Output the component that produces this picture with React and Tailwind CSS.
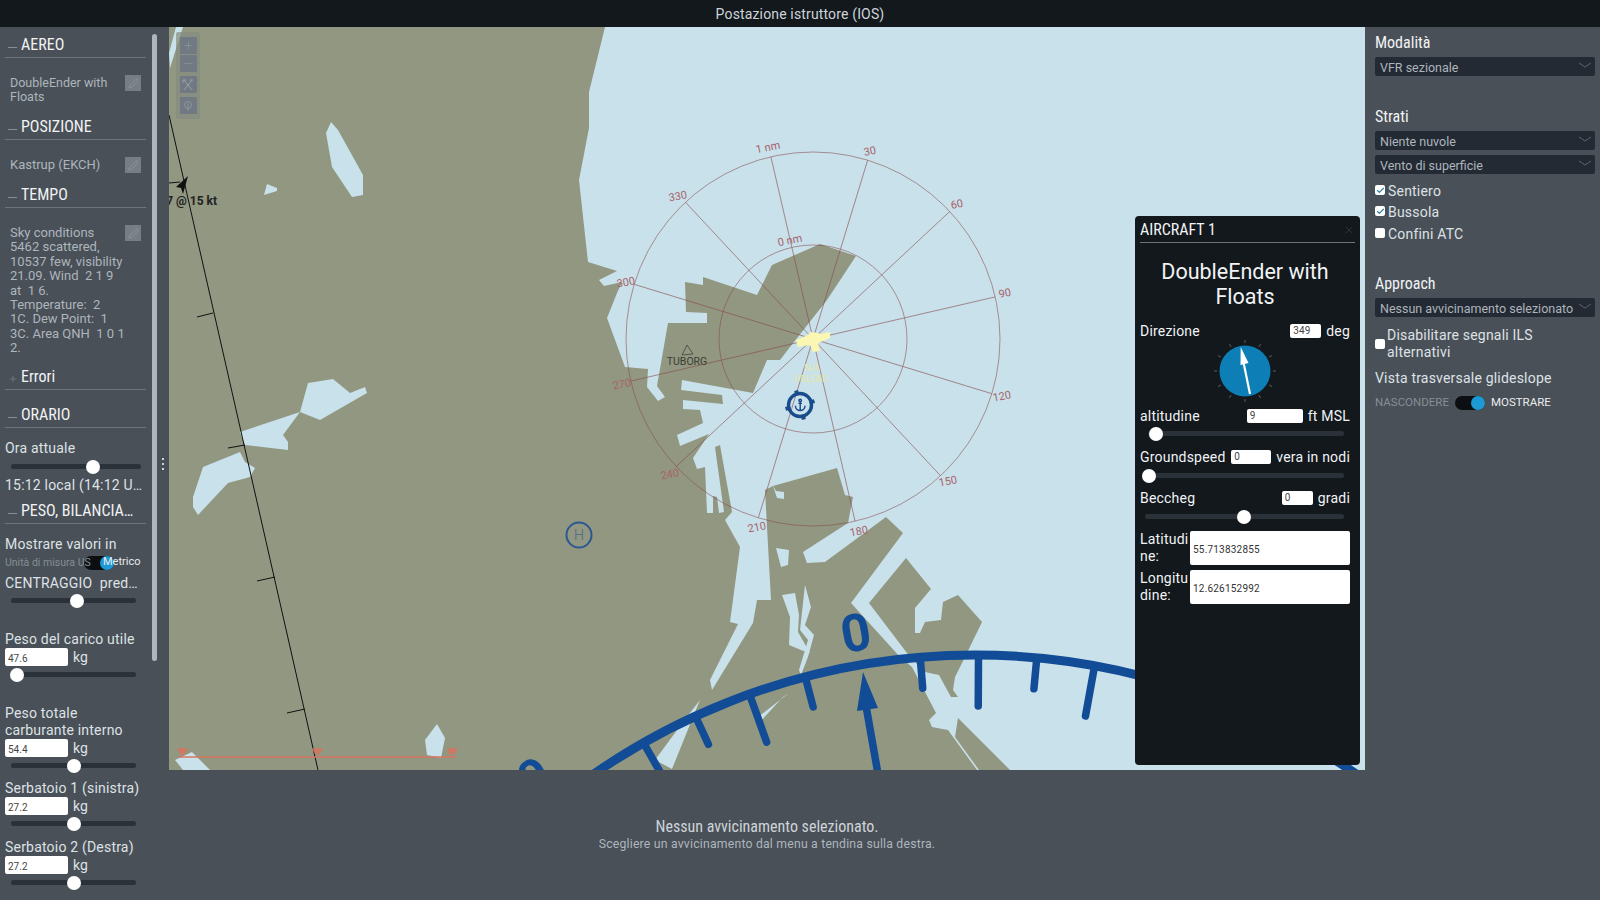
import React from "react";
import { Plus, Minus, Pen, Check, X } from "lucide-react";

const condensed = "font-['Roboto_Condensed','Liberation_Sans_Narrow','Roboto',sans-serif]";

function SectionHeader({ label, open = true }) {
  return (
    <div className="mx-[5px] flex h-[29px] items-center border-b border-[#6c757d] pt-[4px]">
      <span className="ml-[3px] mr-[4px] w-[9px] shrink-0 text-[#868e96]">
        {open ? <span className="mt-[4px] block h-px w-[9px] bg-[#868e96]" /> : <Plus size={10} strokeWidth={1} className="mt-[4px] text-[#9aa1a8]" />}
      </span>
      <span className={`block w-[115px] shrink-0 truncate text-[16px] leading-[22px] text-[#f1f3f5] ${condensed}`}>{label}</span>
    </div>
  );
}

function EditBtn() {
  return (
    <span className="flex h-4 w-4 shrink-0 items-center justify-center bg-[#767d84]">
      <Pen size={11} strokeWidth={1} className="text-[#a5acb3]" />
    </span>
  );
}

function Slider({ thumb, className = "" }) {
  return (
    <div className={`relative h-[5px] rounded-full bg-[#2b3138] ${className}`}>
      <span
        className="absolute top-1/2 h-[14px] w-[14px] -translate-x-1/2 -translate-y-1/2 rounded-full bg-white"
        style={{ left: `${thumb}px` }}
      />
    </div>
  );
}

function Num({ value, className = "" }) {
  return (
    <span className={`flex items-end overflow-hidden rounded-[2px] bg-white pb-[1px] pl-[3px] text-[10px] leading-[12px] text-[#444] ${className}`}>
      {value}
    </span>
  );
}

function LeftField({ label, value, thumb }) {
  return (
    <div className="mx-[5px]">
      <div className="text-[14px] leading-[17px] tracking-[0.2px] text-[#dee2e6]">{label}</div>
      <div className="flex h-[18px] items-center gap-[5px]">
        <Num value={value} className="h-[18px] w-[63px]" />
        <span className="text-[14px] text-[#dee2e6]">kg</span>
      </div>
      <Slider thumb={thumb} className="ml-[6px] mt-[6px] w-[125px]" />
    </div>
  );
}

function Select({ label, mt = "" }) {
  return (
    <div className={`relative flex h-[19px] items-center rounded-[2px] bg-[#242a33] pl-[5px] pt-[4px] text-[12.5px] text-[#adb5bd] ${mt}`}>
      <span className="whitespace-nowrap">{label}</span>
      <svg width="14" height="7" viewBox="0 0 14 7" fill="none" stroke="#5c636b" strokeWidth="1" className="absolute right-[3px] top-[5px]">
        <path d="M1 1l6 4 6-4" />
      </svg>
    </div>
  );
}

function CheckRow({ label, checked, mt = "" }) {
  return (
    <div className={`flex h-[21px] items-center text-[14px] tracking-[0.2px] text-[#dee2e6] ${mt}`}>
      <span className="-mt-[3px] mr-[3px] flex h-[10px] w-[10px] shrink-0 items-center justify-center rounded-[2px] bg-white">
        {checked && <Check size={9} strokeWidth={3} className="text-[#2f7f9f]" />}
      </span>
      {label}
    </div>
  );
}

function Toggle({ className = "" }) {
  return (
    <span className={`relative inline-block h-[14px] w-[30px] shrink-0 rounded-full bg-[#0c0f12] ${className}`}>
      <span className="absolute right-0 top-0 h-[14px] w-[14px] rounded-full bg-[#1c9ad6]" />
    </span>
  );
}

function Sidebar() {
  return (
    <aside className="relative h-full w-[169px] shrink-0 overflow-hidden bg-[#495057] font-['Roboto',sans-serif]">
      <div className="w-[151px] pt-[2px]">
        <SectionHeader label="AEREO" />
        <div className="flex h-[53px] items-start justify-between pl-[10px] pr-[10px] pt-[17px] text-[12.5px] leading-[14.4px] text-[#adb5bd]">
          <span className="mt-[1px] w-[104px]">DoubleEnder with Floats</span>
          <EditBtn />
        </div>
        <SectionHeader label="POSIZIONE" />
        <div className="flex h-[39px] items-start justify-between pl-[10px] pr-[10px] pt-[17px] text-[13px] leading-[16px] text-[#adb5bd]">
          <span>Kastrup (EKCH)</span>
          <EditBtn />
        </div>
        <SectionHeader label="TEMPO" />
        <div className="flex h-[153px] items-start justify-between pl-[10px] pr-[10px] pt-[18px] text-[13px] leading-[14.4px] text-[#adb5bd]">
          <span className="whitespace-pre">{"Sky conditions\n5462 scattered,\n10537 few, visibility\n21.09. Wind  2 1 9\nat  1 6.\nTemperature:  2\n1C. Dew Point:  1\n3C. Area QNH  1 0 1\n2."}</span>
          <span className="-mt-[1px]"><EditBtn /></span>
        </div>
        <SectionHeader label="Errori" open={false} />
        <div className="h-[9px]" />
        <SectionHeader label="ORARIO" />
        <div className="mx-[5px] mt-[12px] text-[14px] leading-[17px] tracking-[0.2px] text-[#dee2e6]">Ora attuale</div>
        <Slider thumb={82} className="ml-[11px] mt-[7px] w-[130px]" />
        <div className="ml-[5px] mt-[7px] w-[143px] truncate text-[14px] leading-[18px] tracking-[0.2px] text-[#dee2e6]">15:12 local (14:12 UTC)</div>
        <div className="mt-[1px]"><SectionHeader label="PESO, BILANCIAMENTO" /></div>
        <div className="mx-[5px] mt-[12px] text-[14px] leading-[17px] tracking-[0.2px] text-[#dee2e6]">Mostrare valori in</div>
        <div className="mx-[5px] mt-[1px] flex h-[17px] items-center whitespace-nowrap">
          <span className="relative z-10 w-[80px] shrink-0 text-[10.5px] text-[#868e96]">Unità di misura US</span>
          <Toggle className="-ml-[1px]" />
          <span className="relative -ml-[11px] text-[11px] text-[#e9ecef]">Metrico</span>
        </div>
        <div className="ml-[5px] mt-[4px] w-[136px] truncate text-[14px] leading-[17px] tracking-[0.2px] text-[#dee2e6]">CENTRAGGIO&nbsp; predefinito</div>
        <Slider thumb={66} className="ml-[11px] mt-[6px] w-[125px]" />
        <div className="mt-[28px]">
          <LeftField label="Peso del carico utile" value="47.6" thumb={6} />
        </div>
        <div className="mt-[28px]">
          <LeftField label={<>Peso totale<br />carburante interno</>} value="54.4" thumb={63} />
        </div>
        <div className="mt-[12px]">
          <LeftField label="Serbatoio 1 (sinistra)" value="27.2" thumb={63} />
        </div>
        <div className="mt-[13px]">
          <LeftField label="Serbatoio 2 (Destra)" value="27.2" thumb={63} />
        </div>
      </div>
      <span className="absolute left-[152px] top-[7px] h-[627px] w-[5px] rounded-full bg-[#adb5bd]" />
      <span className="absolute left-[162px] top-[431px] flex flex-col gap-[3px]">
        <i className="block h-[2px] w-[2px] bg-[#ced4da]" />
        <i className="block h-[2px] w-[2px] bg-[#ced4da]" />
        <i className="block h-[2px] w-[2px] bg-[#ced4da]" />
      </span>
    </aside>
  );
}

const radial = [0, 30, 60, 90, 120, 150, 180, 210, 240, 270, 300, 330];
const rose = [
  ["1 nm", 768, 148], ["30", 870, 152], ["60", 957, 205], ["90", 1005, 294], ["120", 1002, 397], ["150", 948, 482],
  ["180", 859, 532], ["210", 757, 528], ["240", 670, 475], ["270", 622, 385], ["300", 626, 283], ["330", 678, 197], ["0 nm", 790, 241],
];
const land = "169,27 605,27 589,92 589,128 579,180 588,262 617,271 599,280 604,286 622,282 617,293 607,318 625,367 648,369 647,387 658,401 665,397 657,386 668,323 707,323 707,313 686,312 685,282 703,285 703,277 757,295 772,265 820,244 856,256 827,300 790,347 780,360 767,360 753,393 682,380 681,390 722,395 723,404 683,400 683,409 700,410 703,423 677,435 680,446 709,434 693,458 697,469 705,467 707,513 713,513 713,496 717,497 719,513 724,512 715,447 720,445 732,512 725,520 740,547 730,622 738,624 710,680 712,690 753,623 757,600 771,600 765,490 773,486 837,468 845,495 853,497 848,523 803,552 807,563 825,562 886,517 903,533 851,603 900,657 912,667 936,713 929,720 932,727 948,730 977,770 169,770";
const landR = "906,558 931,589 915,608 915,633 920,633 925,622 941,620 943,602 958,595 982,622 965,657 955,677 953,690 958,697 951,697 939,675 925,672 910,657 869,603";
const landS = "958,718 1010,770 979,770 955,737";
const water = [
  "331,122 338,130 363,175 363,195 352,197 332,167 326,133",
  "267,184 277,188 277,191 264,195",
  "308,383 333,379 350,393 365,387 367,393 320,420 300,412",
  "300,412 283,435 288,442 288,450 245,445 240,432",
  "240,452 245,462 255,468 250,477 228,483 198,515 193,507 193,497 203,467",
  "437,724 445,738 441,758 427,755 425,740",
  "175,760 192,752 210,770 183,770",
  "170,68 183,27 176,27 169,53",
  "773,486 776,491 784,492 784,499 777,498",
  "776,548 789,550 788,565 781,567",
  "782,595 795,593 799,615 798,632 810,653 801,650 789,645 790,617",
  "805,585 811,607 805,625 814,635 808,657 801,675 799,670 808,640 800,630",
  "700,700 683,722 655,760 672,769 693,717",
  "758,717 789,693 783,697 760,722",
];
const ticks = [-6, -5, -4, -3, -1, 0, 1, 2, 3, 4, 5];

function ChartSvg() {
  return (
    <svg viewBox="169 27 1196 743" className="block h-full w-full">
      <polygon points={land} fill="#919780" />
      <polygon points={landR} fill="#919780" />
      <polygon points={landS} fill="#919780" />
      {water.map((p, i) => <polygon key={i} points={p} fill="#c8e1ea" />)}

      {/* track with range ticks */}
      <line x1="169" y1="115" x2="318" y2="770" stroke="#111" strokeWidth="1" />
      <path d="M213 313 L197 317 M245 445 L228 448 M275 577 L257 581 M305 709 L287 713" stroke="#111" strokeWidth="1" fill="none" />
      <path d="M188 176 L183 194 L181 188 L176 187 Z" fill="#111" />
      <line x1="169" y1="183" x2="180" y2="182" stroke="#111" strokeWidth="1" />
      <text x="217" y="205" textAnchor="end" fontFamily="Roboto" fontWeight="700" fontSize="12" fill="#222">217 @ 15 kt</text>

      {/* scale bar */}
      <line x1="178" y1="757" x2="456" y2="757" stroke="#d8745f" strokeWidth="1.4" />
      <path d="M178 749 h9 l-3 5 h-3 Z M313 749 h9 l-4 5 h-2 Z M448 749 h9 l-4 5 h-3 Z" fill="#d8745f" stroke="#d8745f" strokeWidth="1.5" strokeLinejoin="round" opacity="0.85" />

      {/* helipad */}
      <circle cx="579" cy="535" r="12.5" fill="none" stroke="#2b5792" strokeWidth="2" />
      <text x="579" y="540" textAnchor="middle" fontFamily="Roboto" fontWeight="300" fontSize="14" fill="#46688f">H</text>

      {/* reporting point */}
      <polygon points="682,355 687,345 693,354" fill="none" stroke="#444" strokeWidth="0.8" />
      <text x="687" y="365" textAnchor="middle" fontFamily="Roboto" fontSize="10.5" fill="#3a3d33">TUBORG</text>

      {/* range rose */}
      <g fill="none" stroke="#8a4a4f" strokeWidth="0.7" opacity="0.8">
        <circle cx="813" cy="339" r="187" />
        <circle cx="813" cy="339" r="94" />
        {radial.map((a) => (
          <line key={a} x1="813" y1="339" x2="813" y2="152" transform={`rotate(${a - 13} 813 339)`} />
        ))}
      </g>
      {rose.map(([t, x, y]) => (
        <text key={t} x={x} y={y} textAnchor="middle" dominantBaseline="middle" fontFamily="Roboto" fontSize="11" fill="#a9636a" transform={`rotate(-11 ${x} ${y})`}>{t}</text>
      ))}

      {/* aircraft */}
      <polygon points="796,340 808,335 810,332 818,333 820,334 830,332 830,338 818,343 820,351 813,352 810,345 798,347" fill="#fbf7b2" />
      <text x="812" y="371" textAnchor="middle" fontFamily="Roboto" fontSize="9" fill="#e6e8a8">N/A</text>
      <text x="811" y="382" textAnchor="middle" fontFamily="Roboto" fontSize="9" fill="#e6e8a8">DBLEND</text>

      {/* anchorage */}
      <circle cx="800" cy="405" r="11.5" fill="none" stroke="#1a4b8c" strokeWidth="3.4" />
      <path d="M800 390 v5 M800 415 v5 M785 405 h5 M810 405 h5" stroke="#1a4b8c" strokeWidth="4" transform="rotate(-15 800 405)" />
      <g transform="translate(793 398) scale(0.6)" fill="none" stroke="#1a4b8c" strokeWidth="2.4">
        <path d="M12 6v16M4 13a8 8 0 0 0 16 0M9 9h6" />
        <circle cx="12" cy="4" r="2" />
      </g>

      {/* compass arc */}
      <g stroke="#124c96" fill="none" strokeLinecap="round">
        <circle cx="975" cy="1324" r="669" strokeWidth="9" />
        {ticks.map((k) => (
          <line key={k} x1="975" y1="655" x2="975" y2={k % 2 === 0 ? 706 : 686} strokeWidth="7.5" transform={`rotate(${k * 5 + 0.3} 975 1324)`} />
        ))}
        <g transform="rotate(-10 975 1324)">
          <line x1="975" y1="700" x2="975" y2="790" strokeWidth="7.5" />
        </g>
      </g>
      <polygon points="863,672 857,711 878,708" fill="#124c96" />
      <text x="856" y="651" textAnchor="middle" fontFamily="Roboto" fontWeight="700" fontSize="52" fill="#124c96" transform="rotate(-10 856 634)">0</text>
      <text x="533" y="795" textAnchor="middle" fontFamily="Roboto" fontWeight="700" fontSize="50" fill="#124c96" transform="rotate(-30 533 775)">0</text>
    </svg>
  );
}

function MapControls() {
  return (
    <div className="absolute left-[7px] top-[5px] flex w-[24px] flex-col items-center rounded-[2px] bg-[#868b80]/70 px-[3px] pb-[5px] pt-[5px]">
      <span className="flex h-[17px] w-[17px] items-center justify-center bg-[#717a82]"><Plus size={13} strokeWidth={1} className="text-[#97a0a6]" /></span>
      <span className="mt-px flex h-[17px] w-[17px] items-center justify-center bg-[#717a82]"><Minus size={13} strokeWidth={1} className="text-[#97a0a6]" /></span>
      <span className="mt-[4px] flex h-[17px] w-[17px] items-center justify-center bg-[#717a82]">
        <svg width="12" height="12" viewBox="0 0 12 12" fill="none" stroke="#a3abaf" strokeWidth="0.8"><path d="M2 1l8 10M10 1L2 11M1 1h3M1 1v3M8 1h3" /></svg>
      </span>
      <span className="mt-[4px] flex h-[17px] w-[17px] items-center justify-center bg-[#717a82]">
        <svg width="12" height="12" viewBox="0 0 12 12" fill="none" stroke="#939ca1" strokeWidth="0.8"><circle cx="6" cy="5" r="3.5" /><path d="M6 3v8" /></svg>
      </span>
    </div>
  );
}

function Knob() {
  return (
    <div className="flex justify-center">
      <svg width="66" height="66" viewBox="0 0 66 66" className="block">
        {Array.from({ length: 12 }, (_, i) => (
          <line key={i} x1="33" y1="2" x2="33" y2="5" stroke="#6b7076" strokeWidth="0.8" transform={`rotate(${i * 30} 33 33)`} />
        ))}
        <circle cx="33" cy="33" r="25.5" fill="#0e7fb6" />
        <line x1="38" y1="56" x2="31" y2="22" stroke="#fff" strokeWidth="2.2" />
        <polygon points="28.7,9 36.5,25 28.5,27" fill="#fff" />
      </svg>
    </div>
  );
}

function Row({ label, value, unit, inputW }) {
  return (
    <div className="flex h-[16px] items-center justify-between text-[14px] tracking-[0.2px] text-[#f1f3f5]">
      <span>{label}</span>
      <span className="flex items-center gap-[5px] whitespace-nowrap">
        <Num value={value} className={`h-[14px] ${inputW}`} />
        <span>{unit}</span>
      </span>
    </div>
  );
}

function Coord({ a, b, value, mt }) {
  return (
    <div className={`flex items-center ${mt}`}>
      <span className="w-[50px] text-[14px] leading-[17px] tracking-[0.2px] text-[#f1f3f5]">{a}<br />{b}</span>
      <span className="flex h-[34px] w-[160px] items-center rounded-[2px] bg-white pl-[3px] pt-[3px] text-[10px] tracking-[0.2px] text-[#333]">{value}</span>
    </div>
  );
}

function AircraftPanel() {
  return (
    <section className="absolute left-[966px] top-[189px] h-[549px] w-[225px] rounded-[4px] bg-[#12181c] pl-[5px] pr-[10px] font-['Roboto',sans-serif]">
      <div className="-mr-[5px] flex h-[27px] items-center justify-between border-b border-[#6c757d] pt-[2px]">
        <span className={`text-[16px] leading-[22px] text-[#f1f3f5] ${condensed}`}>AIRCRAFT 1</span>
        <X size={12} strokeWidth={1} className="text-[#495057]" />
      </div>
      <h2 className="mx-auto mt-[16px] w-[200px] text-center text-[21.5px] font-normal leading-[25px] text-[#f1f3f5]">DoubleEnder with Floats</h2>
      <div className="mt-[14px]"><Row label="Direzione" value="349" unit="deg" inputW="w-[31px]" /></div>
      <div className="-mt-px"><Knob /></div>
      <div className="mt-[4px]"><Row label="altitudine" value="9" unit="ft MSL" inputW="w-[56px]" /></div>
      <Slider thumb={8} className="ml-[8px] mt-[7px] w-[196px]" />
      <div className="mt-[13px]"><Row label="Groundspeed" value="0" unit="vera in nodi" inputW="w-[40px]" /></div>
      <Slider thumb={4} className="ml-[5px] mt-[8px] w-[199px]" />
      <div className="mt-[12px]"><Row label="Beccheg" value="0" unit="gradi" inputW="w-[31px]" /></div>
      <Slider thumb={99} className="ml-[5px] mt-[8px] w-[199px]" />
      <Coord a="Latitudi" b="ne:" value="55.713832855" mt="mt-[12px]" />
      <Coord a="Longitu" b="dine:" value="12.626152992" mt="mt-[5px]" />
    </section>
  );
}

function RightHeading({ children, mt }) {
  return <h3 className={`${mt} pt-[2px] text-[16px] font-normal leading-[18px] text-[#f1f3f5] ${condensed}`}>{children}</h3>;
}

function RightPanel() {
  return (
    <aside className="h-full w-[235px] shrink-0 overflow-hidden bg-[#495057] pl-[10px] pr-[5px] font-['Roboto',sans-serif]">
      <RightHeading mt="mt-[5px]">Modalità</RightHeading>
      <Select label="VFR sezionale" mt="mt-[5px]" />
      <RightHeading mt="mt-[30px]">Strati</RightHeading>
      <Select label="Niente nuvole" mt="mt-[5px]" />
      <Select label="Vento di superficie" mt="mt-[5px]" />
      <div className="mt-[7px]">
        <CheckRow label="Sentiero" checked />
        <CheckRow label="Bussola" checked />
        <CheckRow label="Confini ATC" mt="mt-px" />
      </div>
      <RightHeading mt="mt-[28px]">Approach</RightHeading>
      <Select label="Nessun avvicinamento selezionato" mt="mt-[5px]" />
      <div className="mt-[10px] flex items-center text-[14px] leading-[16.5px] tracking-[0.2px] text-[#dee2e6]">
        <span className="mr-[2px] h-[10px] w-[10px] shrink-0 rounded-[2px] bg-white" />
        <span>Disabilitare segnali ILS alternativi</span>
      </div>
      <div className="mt-[10px] text-[14px] leading-[17px] tracking-[0.2px] text-[#dee2e6]">Vista trasversale glideslope</div>
      <div className="mt-[8px] flex h-[15px] items-center gap-[6px] whitespace-nowrap text-[11.5px]">
        <span className="text-[#868e96]">NASCONDERE</span>
        <Toggle />
        <span className="text-[#e9ecef]">MOSTRARE</span>
      </div>
    </aside>
  );
}

export default function App() {
  return (
    <div className="flex h-[900px] w-[1600px] flex-col overflow-hidden bg-[#495057] font-['Roboto',sans-serif]">
      <header className="flex h-[27px] shrink-0 items-center justify-center bg-[#12181c] pt-[1px] text-[14px] tracking-[0.15px] text-[#ced4da]">
        Postazione istruttore (IOS)
      </header>
      <div className="flex min-h-0 flex-1">
        <Sidebar />
        <main className="flex min-w-0 flex-1 flex-col">
          <div className="relative h-[743px] shrink-0 overflow-hidden bg-[#c8e1ea]">
            <ChartSvg />
            <MapControls />
            <AircraftPanel />
          </div>
          <div className="flex flex-1 flex-col items-center pt-[47px]">
            <div className={`text-[16px] leading-[19px] text-[#ced4da] ${condensed}`}>Nessun avvicinamento selezionato.</div>
            <div className="text-[12.25px] leading-[16px] tracking-[0.2px] text-[#adb5bd]">Scegliere un avvicinamento dal menu a tendina sulla destra.</div>
          </div>
        </main>
        <RightPanel />
      </div>
    </div>
  );
}
